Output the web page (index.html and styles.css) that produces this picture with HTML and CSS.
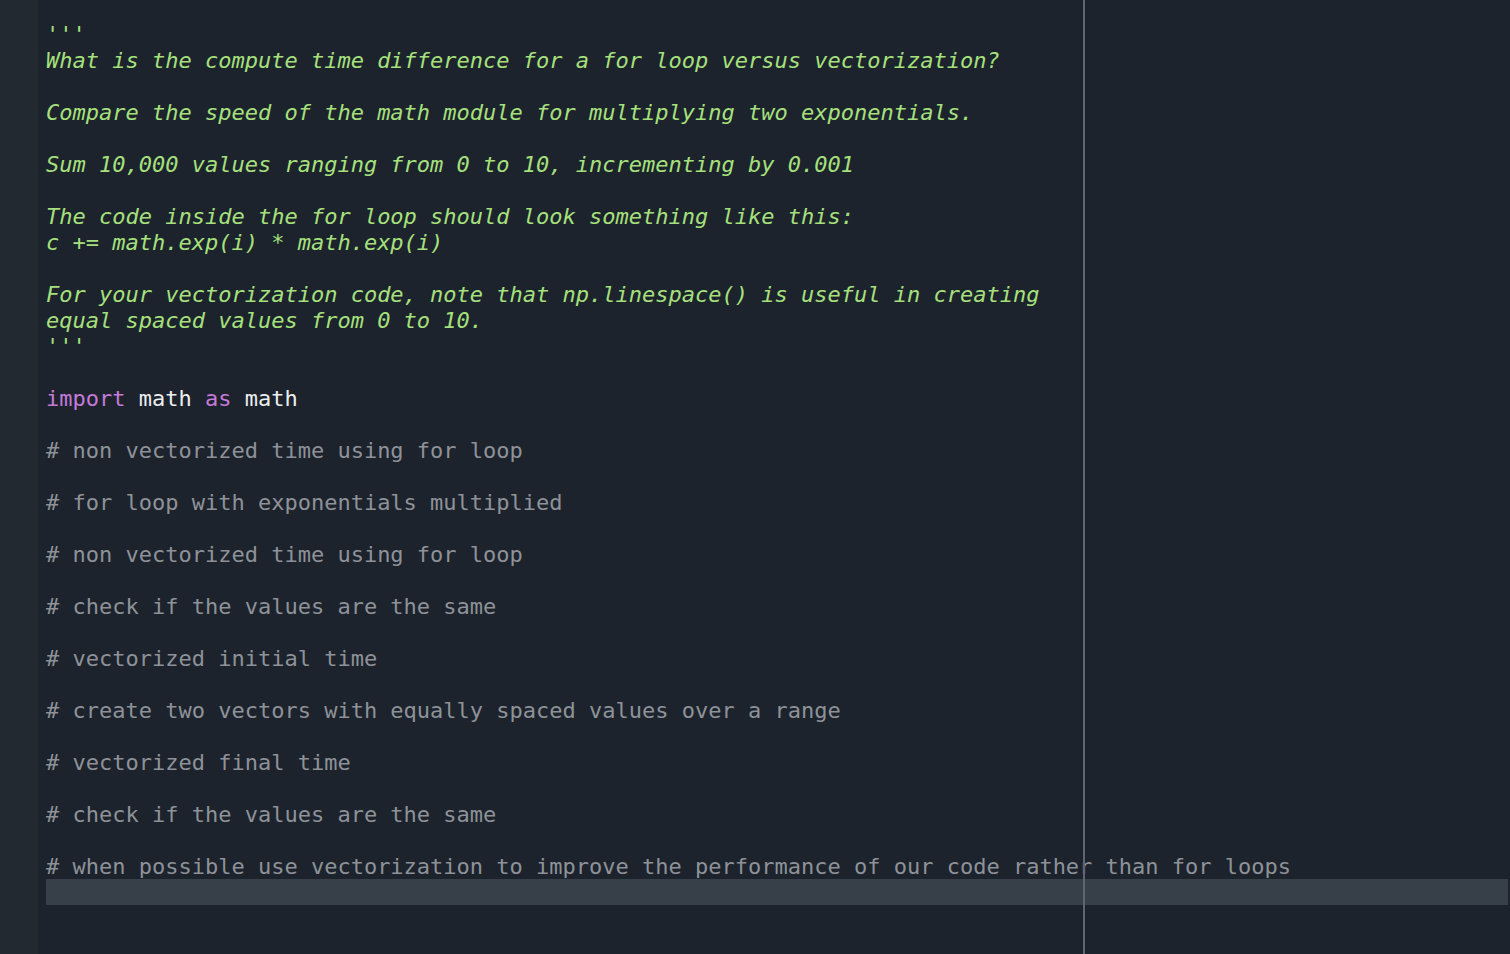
FILE: index.html
```html
<!DOCTYPE html>
<html>
<head>
<meta charset="utf-8">
<link rel="stylesheet" href="styles.css">
</head>
<body>
<div class="editor">
  <div class="gutter"></div>
  <div class="code">
    <div class="ruler"></div>
    <div class="line doc">'''</div>
    <div class="line doc">What is the compute time difference for a for loop versus vectorization?</div>
    <div class="line"></div>
    <div class="line doc">Compare the speed of the math module for multiplying two exponentials.</div>
    <div class="line"></div>
    <div class="line doc">Sum 10,000 values ranging from 0 to 10, incrementing by 0.001</div>
    <div class="line"></div>
    <div class="line doc">The code inside the for loop should look something like this:</div>
    <div class="line doc">c += math.exp(i) * math.exp(i)</div>
    <div class="line"></div>
    <div class="line doc">For your vectorization code, note that np.linespace() is useful in creating</div>
    <div class="line doc">equal spaced values from 0 to 10.</div>
    <div class="line doc">'''</div>
    <div class="line"></div>
    <div class="line"><span class="kw">import</span> <span class="id">math</span> <span class="kw">as</span> <span class="id">math</span></div>
    <div class="line"></div>
    <div class="line cm"># non vectorized time using for loop</div>
    <div class="line"></div>
    <div class="line cm"># for loop with exponentials multiplied</div>
    <div class="line"></div>
    <div class="line cm"># non vectorized time using for loop</div>
    <div class="line"></div>
    <div class="line cm"># check if the values are the same</div>
    <div class="line"></div>
    <div class="line cm"># vectorized initial time</div>
    <div class="line"></div>
    <div class="line cm"># create two vectors with equally spaced values over a range</div>
    <div class="line"></div>
    <div class="line cm"># vectorized final time</div>
    <div class="line"></div>
    <div class="line cm"># check if the values are the same</div>
    <div class="line"></div>
    <div class="line cm"># when possible use vectorization to improve the performance of our code rather than for loops</div>
    <div class="line current"></div>
  </div>
</div>
</body>
</html>
```

FILE: styles.css
```css
html, body {
  margin: 0;
  padding: 0;
  height: 100%;
  background: #1c232d;
  overflow: hidden;
}
.editor {
  display: grid;
  grid-template-columns: 38px 1fr;
  height: 954px;
}
.gutter {
  background: #222931;
}
.code {
  position: relative;
  padding: 22px 2px 0 8px;
  font-family: "DejaVu Sans Mono", monospace;
  font-size: 22px;
  color: #e6e6e6;
}
.line {
  height: 26px;
  line-height: 26px;
  white-space: pre;
  position: relative;
  z-index: 1;
}
.line.current {
  height: 26px;
  margin-top: -1px;
}
.doc {
  color: #a6e07c;
  font-style: italic;
}
.cm {
  color: #8e9298;
}
.kw {
  color: #c57ad9;
}
.id {
  color: #eceef0;
}
.current {
  background: #373f48;
  z-index: 0;
}
.ruler {
  position: absolute;
  top: 0;
  bottom: 0;
  left: 1045px;
  width: 2px;
  background: #5e6570;
  z-index: 2;
}
```
